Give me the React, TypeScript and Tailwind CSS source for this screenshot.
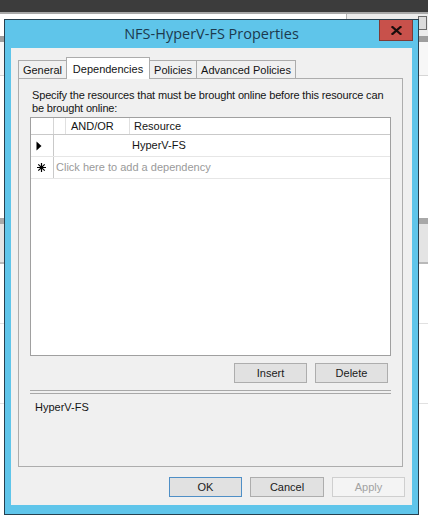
import type { ReactNode } from 'react'

function Tab({ label, width, active }: { label: string; width: string; active?: boolean }) {
  if (active) {
    return (
      <div
        className={`${width} relative z-10 -mb-px -ml-px flex h-[22px] items-start justify-center whitespace-nowrap border border-b-0 border-[#acacac] bg-white pt-[3px]`}
      >
        {label}
      </div>
    )
  }
  return (
    <div
      className={`${width} -ml-px flex h-[18px] items-center justify-center whitespace-nowrap border border-b-0 border-[#acacac] bg-[#f0f0f0] pt-[2px]`}
    >
      {label}
    </div>
  )
}

function Button({
  children,
  width,
  tone = 'normal',
}: {
  children: ReactNode
  width: string
  tone?: 'normal' | 'default' | 'disabled'
}) {
  const look =
    tone === 'default'
      ? 'border-[#4f8fc6] bg-[#e1e1e1] text-[#1a1a1a]'
      : tone === 'disabled'
        ? 'border-[#cfcfcf] bg-[#f4f4f4] text-[#a2a2a2]'
        : 'border-[#adadad] bg-[#e1e1e1] text-[#1a1a1a]'
  return (
    <div className={`${width} ${look} flex h-[20px] items-center justify-center border`}>{children}</div>
  )
}

function RowArrow() {
  return (
    <svg width="6" height="10" viewBox="0 0 6 10">
      <path d="M0.5 0.5 L5.5 5 L0.5 9.5 Z" fill="#000" />
    </svg>
  )
}

function RowStar() {
  return (
    <svg width="9" height="9" viewBox="0 0 9 9" stroke="#000" strokeWidth="1.2">
      <path d="M4.5 0 V9 M0 4.5 H9 M1.3 1.3 L7.7 7.7 M7.7 1.3 L1.3 7.7" />
    </svg>
  )
}

export default function App() {
  return (
    <div className="relative h-[515px] w-[428px] overflow-hidden bg-white font-['Liberation_Sans',Arial,sans-serif] text-[11px] text-[#141414]">
      {/* window behind the dialog */}
      <div className="h-[12px] bg-[#3c3c3c]" />
      <div className="h-[2px] bg-[#a9a9a9]" />
      <div className="flex h-[22px]">
        <div className="flex-1 bg-white" />
        <div className="flex w-[82px] items-start justify-end border-l border-[#b5b5b5] bg-[#ececec] pr-[1px] pt-[2px]">
          <div className="h-[14px] w-[9px] border border-[#6a6a6a] bg-[#dcdcdc]" />
        </div>
      </div>
      <div className="h-[6px] bg-[#9e9e9e]" />
      <div className="h-[34px] border-b border-[#d6d6d6] bg-[#f7f7f7]" />
      <div className="h-[142px]" />
      <div className="h-[6px] bg-[#a8a8a8]" />
      <div className="h-[40px] border-b-2 border-[#b9b9b9] bg-[#e4e4e4]" />
      <div className="h-[60px] border-b border-[#e1e1e1]" />
      <div className="h-[80px] border-b border-[#e1e1e1]" />

      {/* properties dialog */}
      <div className="absolute left-[4px] top-[19px] flex h-[496px] w-[415px] flex-col border border-[#27404f] bg-[#5fc5ea]">
        <div className="relative flex h-[28px] items-center justify-center">
          <span className="font-['Open_Sans',sans-serif] text-[14.5px] text-[#1c3a4e]">NFS-HyperV-FS Properties</span>
          <div className="absolute right-[5px] top-0 flex h-[21px] w-[34px] items-center justify-center border border-t-0 border-[#7e3a35] bg-[#c8514b]">
            <svg width="11" height="9" viewBox="0 0 11 9" stroke="#1a0d0c" strokeWidth="2.2" strokeLinecap="square">
              <path d="M1.5 1 L9.5 8 M9.5 1 L1.5 8" />
            </svg>
          </div>
        </div>

        <div className="mx-[6px] flex h-[457px] flex-col bg-[#f0f0f0]">
          {/* tabs */}
          <div className="ml-[8px] mt-[9px] flex h-[21px] items-end">
            <Tab label="General" width="w-[49px]" />
            <Tab label="Dependencies" width="w-[84px]" active />
            <Tab label="Policies" width="w-[48px]" />
            <Tab label="Advanced Policies" width="w-[100px]" />
          </div>

          <div className="ml-[7px] flex h-[389px] w-[385px] flex-col border border-[#adadad] bg-[#f0f0f0]">
            <p className="ml-[13px] mt-[10px] whitespace-nowrap leading-[13px] tracking-[-0.16px]">
              Specify the resources that must be brought online before this resource can
              <br />
              be brought online:
            </p>

            {/* dependency grid */}
            <div className="ml-[11px] mt-[2px] flex h-[239px] w-[361px] flex-col border border-[#a0a0a0] bg-white">
              <div className="flex h-[17px] border-b border-[#c9c9c9]">
                <div className="w-[23px] border-r border-[#d5d5d5]" />
                <div className="w-[12px] border-r border-[#e0e0e0]" />
                <div className="flex w-[64px] items-center border-r border-[#e0e0e0] pl-[5px]">AND/OR</div>
                <div className="flex flex-1 items-center pl-[4px]">Resource</div>
              </div>
              <div className="flex h-[22px] border-b border-[#e6e6e6]">
                <div className="flex w-[23px] items-center border-r border-[#c9c9c9] pl-[5px]">
                  <RowArrow />
                </div>
                <div className="w-[77px]" />
                <div className="flex flex-1 items-center pl-[1px]">HyperV-FS</div>
              </div>
              <div className="flex h-[22px] border-b border-[#e6e6e6]">
                <div className="flex w-[23px] items-center border-r border-[#c9c9c9] pl-[6px]">
                  <RowStar />
                </div>
                <div className="flex flex-1 items-center pl-[2px] text-[#9a9a9a]">Click here to add a dependency</div>
              </div>
            </div>

            <div className="mr-[14px] mt-[7px] flex justify-end gap-[8px]">
              <Button width="w-[73px]">Insert</Button>
              <Button width="w-[73px]">Delete</Button>
            </div>

            <div className="ml-[11px] mt-[7px] h-[4px] w-[361px] border-y border-[#a8a8a8]" />

            <div className="ml-[16px] mt-[6px] leading-[14px]">HyperV-FS</div>
          </div>

          {/* dialog buttons */}
          <div className="mr-[7px] mt-[10px] flex justify-end gap-[8px]">
            <Button width="w-[73px]" tone="default">
              OK
            </Button>
            <Button width="w-[74px]">Cancel</Button>
            <Button width="w-[73px]" tone="disabled">
              Apply
            </Button>
          </div>
        </div>
      </div>
    </div>
  )
}
